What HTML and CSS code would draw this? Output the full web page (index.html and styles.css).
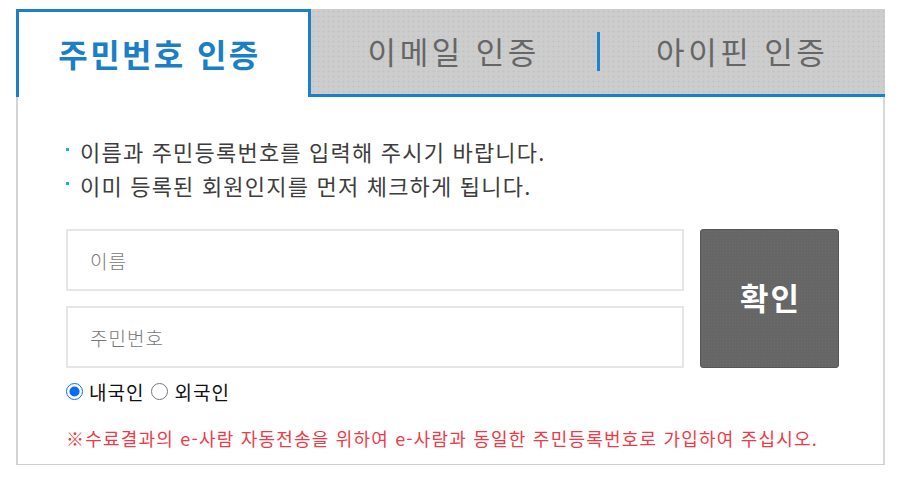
FILE: index.html
```html
<!DOCTYPE html>
<html lang="ko">
<head>
<meta charset="utf-8">
<title>본인 인증</title>
<link rel="stylesheet" href="styles.css">
</head>
<body>
<div class="wrap">
  <div class="tabs">
    <div class="tab tab-active">주민번호 인증</div>
    <div class="tab-rest">
      <div class="tab tab-off">이메일 인증</div>
      <span class="divider"></span>
      <div class="tab tab-off">아이핀 인증</div>
    </div>
  </div>
  <div class="panel">
    <ul class="notes">
      <li>이름과 주민등록번호를 입력해 주시기 바랍니다.</li>
      <li>이미 등록된 회원인지를 먼저 체크하게 됩니다.</li>
    </ul>
    <div class="form">
      <div class="fields">
        <input class="field" type="text" placeholder="이름">
        <input class="field" type="text" placeholder="주민번호">
      </div>
      <button class="confirm" type="button">확인</button>
    </div>
    <div class="radios">
      <label class="radio"><input type="radio" name="nat" checked> 내국인</label>
      <label class="radio"><input type="radio" name="nat"> 외국인</label>
    </div>
    <p class="warn">※수료결과의 e-사람 자동전송을 위하여 e-사람과 동일한 주민등록번호로 가입하여 주십시오.</p>
  </div>
</div>
</body>
</html>
```
FILE: styles.css
```css
* { box-sizing: border-box; }
html, body { margin: 0; padding: 0; background: #fff; }
body { font-family: "Noto Sans CJK KR", "Noto Sans", sans-serif; }

.wrap {
  width: 869px;
  margin: 9px 0 0 16px;
}

.tabs {
  display: flex;
  height: 88px;
}
.tab {
  display: flex;
  align-items: center;
  justify-content: center;
  padding-bottom: 4px;
}
.tab-active {
  width: 295px;
  border: 3px solid #1a80c9;
  border-bottom: none;
  background: #fff;
  color: #1a7fc6;
  font-size: 32px;
  font-weight: 700;
  letter-spacing: 2.4px;
  padding-right: 8px;
}
.tab-rest {
  flex: 1;
  display: flex;
  align-items: stretch;
  background-color: #cdcdcd;
  background-image: radial-gradient(circle, #c2c2c2 0.8px, transparent 1.2px);
  background-size: 5px 5px;
  border-bottom: 3px solid #1a80c9;
}
.tab-off {
  flex: 1;
  color: #666;
  font-size: 31px;
  font-weight: 400;
  letter-spacing: 3.5px;
  padding-bottom: 2px;
}
.divider {
  align-self: center;
  width: 3px;
  height: 39px;
  background: #1a84cc;
}

.panel {
  height: 368px;
  border-left: 2px solid #d4d4d4;
  border-right: 2px solid #d8d8d8;
  border-bottom: 1px solid #cfcfcf;
  padding: 37px 0 0 48px;
}

.notes {
  list-style: none;
  margin: 0;
  padding: 0;
  font-size: 22px;
  line-height: 34px;
  letter-spacing: 1.2px;
  color: #3d3d3d;
}
.notes li {
  position: relative;
  padding-left: 14px;
}
.notes li::before {
  content: "";
  position: absolute;
  left: 0;
  top: 14px;
  width: 3px;
  height: 3px;
  background: #19b2c9;
}

.form {
  display: flex;
  gap: 16px;
  margin-top: 27px;
}
.fields {
  display: flex;
  flex-direction: column;
  gap: 15px;
}
.field {
  width: 618px;
  height: 62px;
  border: 2px solid #e6e6e6;
  padding: 0 22px;
  font-family: "Noto Sans CJK KR", sans-serif;
  font-size: 19px;
  font-weight: 300;
  letter-spacing: 1px;
  color: #333;
  outline: none;
}
.field::placeholder { color: #777; }

.confirm {
  width: 139px;
  height: 139px;
  border: 1px solid #555;
  border-radius: 3px;
  background-color: #666;
  background-image: radial-gradient(circle, #6d6d6d 0.6px, transparent 1px);
  background-size: 3px 3px;
  color: #fff;
  font-family: "Noto Sans CJK KR", sans-serif;
  font-size: 31px;
  font-weight: 700;
  letter-spacing: 2px;
  padding: 0 0 4px 2px;
}

.radios {
  display: flex;
  align-items: center;
  gap: 7px;
  margin-top: 10px;
  font-size: 19px;
  letter-spacing: 1px;
  color: #111;
}
.radio {
  display: flex;
  align-items: center;
  gap: 6px;
}
.radio input {
  margin: 0;
  width: 17px;
  height: 17px;
  accent-color: #0a6cf5;
}

.warn {
  margin: 20px 0 0;
  font-size: 18px;
  color: #f03a48;
  letter-spacing: 1.2px;
}
```
